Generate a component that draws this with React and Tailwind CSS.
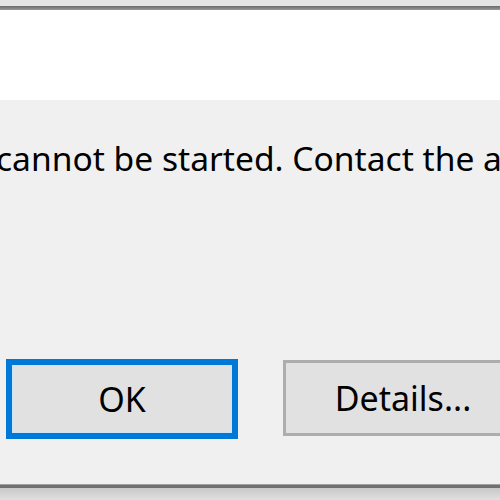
export default function App() {
  return (
    <div
      className="w-[500px] h-[500px] overflow-hidden flex flex-col bg-[#f0f0f0]"
      style={{ fontFamily: '"Noto Sans", "Open Sans", sans-serif' }}
    >
      {/* title bar remains */}
      <div className="h-[6px] bg-[#e4e4e4]" />
      <div className="h-[4px] bg-gradient-to-b from-[#6a6a6a] to-[#9a9a9a]" />
      <div className="h-[90px] bg-white" />

      {/* body */}
      <div className="flex-1 flex flex-col">
        <div className="pt-[36px] h-[259px] whitespace-nowrap text-[33.6px] leading-[44px] text-black ml-[-4px]">
          cannot be started. Contact the administrator
        </div>

        <div className="flex items-start pl-[6px]">
          <button className="w-[232px] h-[80px] shrink-0 border-[6px] border-[#0078d7] bg-[#e1e1e1] outline outline-1 outline-[#cce4f7] -outline-offset-[7px] text-[34px] text-black flex items-center justify-center">
            OK
          </button>
          <button className="ml-[45px] mt-[1px] w-[240px] h-[76px] shrink-0 border-[3px] border-[#adadad] bg-[#e1e1e1] text-[34px] text-black flex items-center justify-center">
            Details...
          </button>
        </div>
        <div className="flex-1" />
      </div>

      <div className="h-[1px] bg-[#a0a0a0]" />
      <div className="h-[3px] bg-[#707070]" />
      <div className="h-[12px] bg-gradient-to-b from-[#c8c8c8] to-[#e0e0e0]" />
    </div>
  );
}
